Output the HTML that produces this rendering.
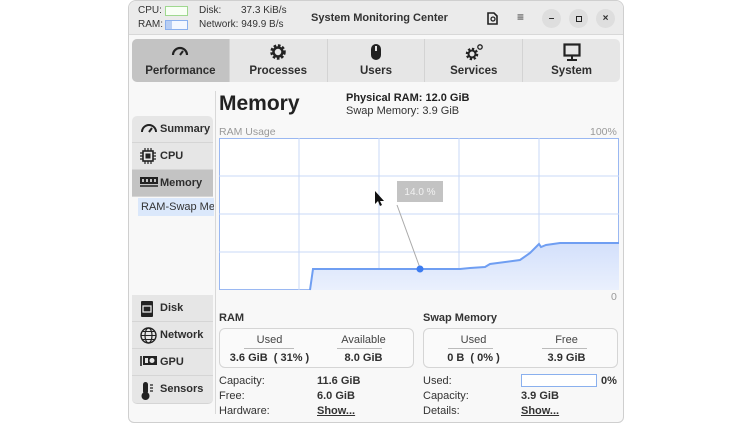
<!DOCTYPE html>
<html><head><meta charset="utf-8"><style>
*{box-sizing:border-box;margin:0;padding:0}
body{width:752px;height:423px;background:#fff;font-family:"Liberation Sans","DejaVu Sans",sans-serif;position:relative;overflow:hidden;color:#2e2e2e}
.win{position:absolute;left:128px;top:0;width:496px;height:423px;background:#f8f8f8;border:1px solid #cfcfcf;border-radius:8px 8px 6px 6px;overflow:hidden}
.hdr{position:absolute;left:0;top:0;width:100%;height:34px;background:#ebebeb;border-bottom:1px solid #d8d8d8}
.a{position:absolute;font-size:10px;color:#333;white-space:nowrap}
.b{font-weight:bold}
.tabs{position:absolute;left:3px;top:38px;width:488px;height:43px;background:#e6e6e6;border-radius:5px;overflow:hidden;display:flex}
.tab{flex:1;border-right:1px solid #d3d3d3;position:relative;text-align:center;font-size:11.5px;font-weight:bold;color:#2e2e2e}
.tab:last-child{border-right:none}
.tab.sel{background:#c3c3c3}
.tab span{position:absolute;bottom:5px;left:0;right:0}
.tab svg{position:absolute;top:4px;left:50%;transform:translateX(-50%)}
.side{position:absolute;left:3px;width:81px;height:27px;background:#e6e6e6;font-size:11px;font-weight:bold;border-bottom:1px solid #d5d5d5}
.side span{position:absolute;left:28px;top:7px}
.side svg{position:absolute;left:8px;top:5px}
.circ{position:absolute;top:8px;width:19px;height:19px;border-radius:50%;background:#dedede;font-size:10px;text-align:center;line-height:19px;font-weight:bold}
.box{position:absolute;top:327px;height:40px;border:1px solid #d5d5d5;border-radius:6px;background:#fafafa}
.c{position:absolute;text-align:center;font-size:11px}
.ul{position:absolute;height:1px;background:#bbb}
</style></head><body>
<div class="win">
<div class="hdr">
<div class="a" style="left:9px;top:4px">CPU:</div>
<div style="position:absolute;left:36px;top:5px;width:23px;height:10px;border:1px solid #9fd88f;background:#f8fff5"></div>
<div class="a" style="left:9px;top:18px">RAM:</div>
<div style="position:absolute;left:36px;top:19px;width:23px;height:10px;border:1px solid #8ab0ee;background:#f3f7ff"><div style="width:6px;height:8px;background:#b7cdf3"></div></div>
<div class="a" style="left:70px;top:4px">Disk:</div>
<div class="a" style="left:112px;top:4px">37.3 KiB/s</div>
<div class="a" style="left:70px;top:18px">Network: 949.9 B/s</div>
<div class="a b" style="left:182px;top:11px;font-size:11px">System Monitoring Center</div>
<svg style="position:absolute;left:358px;top:11px" width="11" height="13" viewBox="0 0 11 13"><path d="M1 1h6l3 3v8H1z" fill="none" stroke="#222" stroke-width="1.6"/><circle cx="6" cy="7" r="2" fill="none" stroke="#222" stroke-width="1.3"/></svg>
<div class="a" style="left:388px;top:9px;font-size:12px">≡</div>
<div class="circ" style="left:413px">–</div>
<div class="circ" style="left:440px"><div style="width:6px;height:6px;border:1.5px solid #222;margin:6.5px auto 0"></div></div>
<div class="circ" style="left:467px">×</div>
</div>
<div class="tabs">
<div class="tab sel"><svg width="18" height="16" viewBox="0 0 18 16"><path d="M2 12A7 7 0 0 1 16 12" fill="none" stroke="#222" stroke-width="2.2"/><path d="M9 12l3-4" stroke="#222" stroke-width="2"/></svg><span>Performance</span></div>
<div class="tab"><svg width="18" height="18" viewBox="0 0 18 18"><circle cx="9" cy="9" r="6" fill="none" stroke="#222" stroke-width="3.5" stroke-dasharray="2.4 1.6"/><circle cx="9" cy="9" r="4.5" fill="none" stroke="#222" stroke-width="2.5"/></svg><span>Processes</span></div>
<div class="tab"><svg width="12" height="18" viewBox="0 0 12 18"><rect x="1" y="1" width="10" height="16" rx="5" fill="#222"/><rect x="5" y="3" width="2" height="5" fill="#e6e6e6"/></svg><span>Users</span></div>
<div class="tab"><svg width="20" height="18" viewBox="0 0 20 18"><circle cx="8" cy="11" r="4.5" fill="none" stroke="#222" stroke-width="3.5" stroke-dasharray="2 1.5"/><circle cx="8" cy="11" r="3.5" fill="none" stroke="#222" stroke-width="2"/><circle cx="16" cy="4" r="2.2" fill="none" stroke="#222" stroke-width="1.3"/></svg><span>Services</span></div>
<div class="tab"><svg width="18" height="18" viewBox="0 0 18 18"><rect x="1.5" y="1.5" width="15" height="11" fill="none" stroke="#222" stroke-width="2.2"/><path d="M9 13v3M4 17h10" stroke="#222" stroke-width="2"/></svg><span>System</span></div>
</div>
<div style="position:absolute;left:86px;top:90px;width:1px;height:323px;background:#d8d8d8"></div>
<div class="side" style="top:115px;border-radius:5px 5px 0 0"><svg width="18" height="14" viewBox="0 0 18 14"><path d="M2 11A7 7 0 0 1 16 11" fill="none" stroke="#222" stroke-width="2"/><path d="M9 11l3-4" stroke="#222" stroke-width="2"/></svg><span>Summary</span></div>
<div class="side" style="top:142px"><svg width="16" height="16" viewBox="0 0 16 16"><rect x="3" y="3" width="10" height="10" fill="none" stroke="#222" stroke-width="1.6"/><rect x="5.5" y="5.5" width="5" height="5" fill="#222"/><path d="M5 0v3M8 0v3M11 0v3M5 13v3M8 13v3M11 13v3M0 5h3M0 8h3M0 11h3M13 5h3M13 8h3M13 11h3" stroke="#222" stroke-width="1.2"/></svg><span>CPU</span></div>
<div class="side" style="top:169px;background:#c3c3c3"><svg width="18" height="14" viewBox="0 0 18 14"><rect x="0" y="2" width="18" height="7" fill="#222"/><rect x="2" y="4" width="2" height="3" fill="#c3c3c3"/><rect x="6" y="4" width="2" height="3" fill="#c3c3c3"/><rect x="10" y="4" width="2" height="3" fill="#c3c3c3"/><rect x="14" y="4" width="2" height="3" fill="#c3c3c3"/><path d="M0 11h18" stroke="#222" stroke-width="1.6"/></svg><span>Memory</span></div>
<div style="position:absolute;left:9px;top:197px;width:76px;height:18px;background:#dbe8fb;font-size:11px;padding:3px 0 0 3px;overflow:hidden;white-space:nowrap;color:#333">RAM-Swap Mer</div>
<div class="side" style="top:294px"><svg width="14" height="18" viewBox="0 0 14 18"><rect x="1" y="1" width="12" height="16" rx="1" fill="#222"/><rect x="3" y="6" width="8" height="6" fill="none" stroke="#e6e6e6" stroke-width="1.3"/></svg><span>Disk</span></div>
<div class="side" style="top:321px"><svg width="17" height="17" viewBox="0 0 17 17"><circle cx="8.5" cy="8.5" r="7.5" fill="none" stroke="#222" stroke-width="1.4"/><ellipse cx="8.5" cy="8.5" rx="3.5" ry="7.5" fill="none" stroke="#222" stroke-width="1.2"/><path d="M1 8.5h15M2.5 4.5h12M2.5 12.5h12" stroke="#222" stroke-width="1.1"/></svg><span>Network</span></div>
<div class="side" style="top:348px"><svg width="18" height="14" viewBox="0 0 18 14"><path d="M1 2v10" stroke="#222" stroke-width="1.6"/><rect x="3" y="2" width="14" height="9" fill="#222"/><circle cx="12" cy="6.5" r="2.5" fill="#e6e6e6"/><rect x="5" y="4" width="3" height="5" fill="#e6e6e6"/></svg><span>GPU</span></div>
<div class="side" style="top:375px;height:28px;border-radius:0 0 5px 5px"><svg width="14" height="20" viewBox="0 0 14 20"><rect x="3" y="1" width="5" height="12" rx="2.5" fill="#222"/><circle cx="5.5" cy="15" r="4" fill="#222"/><path d="M10 4h3M10 7h3M10 10h3" stroke="#222" stroke-width="1.2"/></svg><span>Sensors</span></div>
<div class="a b" style="left:90px;top:91px;font-size:21px;color:#222">Memory</div>
<div class="a b" style="left:217px;top:91px;font-size:11px;color:#222">Physical RAM: 12.0 GiB</div>
<div class="a" style="left:217px;top:104px;font-size:11px">Swap Memory: 3.9 GiB</div>
<div class="a" style="left:90px;top:125px;color:#999;font-size:10.5px">RAM Usage</div>
<div class="a" style="left:461px;top:125px;color:#999;font-size:10.5px">100%</div>
<div class="a" style="left:482px;top:290px;color:#999;font-size:10.5px">0</div>
<svg style="position:absolute;left:90px;top:137px" width="400" height="153" viewBox="0 0 400 153">
<defs><linearGradient id="g" x1="0" y1="0" x2="0" y2="1"><stop offset="0" stop-color="#d3e0fb"/><stop offset="1" stop-color="#eaf0fd"/></linearGradient></defs>
<rect x="0.5" y="0.5" width="399" height="151" fill="#fff" stroke="#9ab8f2"/>
<path d="M80 0v152M160 0v152M240 0v152M320 0v152M0 38h400M0 76h400M0 114h400" stroke="#c9d9f7" stroke-width="1"/>
<path d="M91 152L94 131H241L251 130L266 129L271 126L301 122L311 115L320 106L322 109L327 107L341 105L400 105V152Z" fill="url(#g)"/>
<path d="M91 152L94 131H241L251 130L266 129L271 126L301 122L311 115L320 106L322 109L327 107L341 105L400 105" fill="none" stroke="#6f9ef2" stroke-width="2"/>
<path d="M178 67L201 130" stroke="#aaa" stroke-width="1"/>
<circle cx="201" cy="131" r="3.5" fill="#3d7cf0"/>
<rect x="178" y="43" width="46" height="21" fill="#c3c3c3"/>
<text x="201" y="57" font-size="10" fill="#f2f2f2" text-anchor="middle" font-family="Liberation Sans,sans-serif">14.0 %</text>
<path d="M156 53v13l3-3 2 5 2-1-2-4h4z" fill="#111"/>
</svg>
<div class="a b" style="left:90px;top:311px;font-size:11px">RAM</div>
<div class="a b" style="left:294px;top:311px;font-size:11px">Swap Memory</div>
<div class="box" style="left:90px;width:195px"></div>
<div class="box" style="left:294px;width:195px"></div>
<div class="c" style="left:103px;width:75px;top:333px;color:#444">Used</div><div class="ul" style="left:115px;width:50px;top:347px"></div>
<div class="c" style="left:93px;width:95px;top:351px;font-weight:bold">3.6 GiB&nbsp; ( 31% )</div>
<div class="c" style="left:197px;width:75px;top:333px;color:#444">Available</div><div class="ul" style="left:208px;width:45px;top:347px"></div>
<div class="c" style="left:197px;width:75px;top:351px;font-weight:bold">8.0 GiB</div>
<div class="c" style="left:307px;width:75px;top:333px;color:#444">Used</div><div class="ul" style="left:319px;width:45px;top:347px"></div>
<div class="c" style="left:302px;width:85px;top:351px;font-weight:bold">0 B&nbsp; ( 0% )</div>
<div class="c" style="left:400px;width:75px;top:333px;color:#444">Free</div><div class="ul" style="left:413px;width:45px;top:347px"></div>
<div class="c" style="left:400px;width:75px;top:351px;font-weight:bold">3.9 GiB</div>
<div class="a" style="left:90px;top:374px;font-size:11px">Capacity:</div><div class="a b" style="left:188px;top:374px;font-size:11px">11.6 GiB</div>
<div class="a" style="left:90px;top:389px;font-size:11px">Free:</div><div class="a b" style="left:188px;top:389px;font-size:11px">6.0 GiB</div>
<div class="a" style="left:90px;top:404px;font-size:11px">Hardware:</div><div class="a b" style="left:188px;top:404px;font-size:11px;text-decoration:underline">Show...</div>
<div class="a" style="left:294px;top:374px;font-size:11px">Used:</div>
<div style="position:absolute;left:392px;top:373px;width:76px;height:13px;border:1px solid #8ab0ee;background:#fff"></div>
<div class="a b" style="left:472px;top:374px;font-size:11px">0%</div>
<div class="a" style="left:294px;top:389px;font-size:11px">Capacity:</div><div class="a b" style="left:392px;top:389px;font-size:11px">3.9 GiB</div>
<div class="a" style="left:294px;top:404px;font-size:11px">Details:</div><div class="a b" style="left:392px;top:404px;font-size:11px;text-decoration:underline">Show...</div>
</div>
</body></html>
